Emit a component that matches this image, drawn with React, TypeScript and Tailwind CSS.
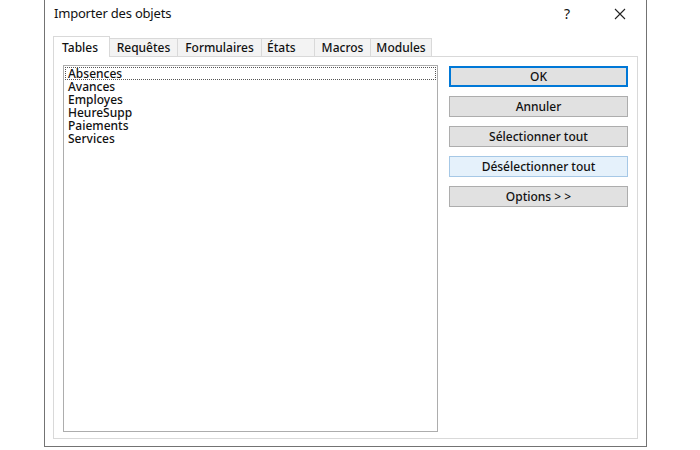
import React from 'react';

const TABS = [
  { label: 'Tables', cls: 'w-[57px]' },
  { label: 'Requêtes', cls: 'w-[68px] justify-center' },
  { label: 'Formulaires', cls: 'w-[84px] justify-center' },
  { label: 'États', cls: 'w-[53px] pl-[5px]' },
  { label: 'Macros', cls: 'w-[56px] justify-center' },
  { label: 'Modules', cls: 'w-[61px] justify-center' },
];

const TABLES = ['Absences', 'Avances', 'Employes', 'HeureSupp', 'Paiements', 'Services'];

const Button: React.FC<{ label: string; variant?: 'default' | 'primary' | 'hover' }> = ({
  label,
  variant = 'default',
}) => {
  const look =
    variant === 'primary'
      ? 'border-2 border-[#0078d7] bg-[#e1e1e1]'
      : variant === 'hover'
      ? 'border border-[#a6c8e6] bg-[#e5f1fb]'
      : 'border border-[#adadad] bg-[#e1e1e1]';
  return (
    <button
      className={`h-[21px] w-[179px] flex items-center justify-center text-[12px] font-medium text-[#111] ${look}`}
    >
      {label}
    </button>
  );
};

export default function App() {
  return (
    <div
      className="w-[700px] h-[450px] bg-white overflow-hidden"
      style={{ fontFamily: '"Noto Sans", "Open Sans", sans-serif' }}
    >
      <div className="ml-[44px] w-[603px] h-[447px] border-x border-b border-[#737373] flex flex-col">
        {/* title bar */}
        <div className="h-[27px] flex items-center pl-[9px] text-[13px] text-[#111]">
          <span className="tracking-[-0.2px]">Importer des objets</span>
          <span className="ml-auto mr-[44px] text-[14px]">?</span>
          <svg width="12" height="12" viewBox="0 0 12 12" className="mr-[20px]">
            <path d="M1 1 L11 11 M11 1 L1 11" stroke="#222" strokeWidth="1.1" />
          </svg>
        </div>

        {/* tabs */}
        <div className="h-[29px] flex items-end pl-[8px] relative z-10">
          {TABS.map((t, i) =>
            i === 0 ? (
              <div
                key={t.label}
                className={`${t.cls} h-[21px] -mb-px bg-white border-x border-t border-[#d9d9d9] flex items-start pt-[2px] pl-[8px] text-[12px] font-medium text-[#111]`}
              >
                {t.label}
              </div>
            ) : (
              <div
                key={t.label}
                className={`${t.cls} h-[18px] bg-[#f3f3f3] border-t border-r border-[#d9d9d9] flex items-center text-[12px] font-medium text-[#111]`}
              >
                {t.label}
              </div>
            )
          )}
        </div>

        {/* panel */}
        <div className="mx-[8px] h-[383px] border border-[#d9d9d9] bg-white flex pl-[9px] pt-[8px] gap-[11px]">
          <div className="w-[375px] h-[367px] border border-[#adadad] bg-white p-px">
            {TABLES.map((name, i) => (
              <div
                key={name}
                className={`h-[13px] leading-[13px] pl-[3px] text-[12px] font-medium text-[#111] ${
                  i === 0 ? 'outline outline-1 outline-dotted outline-[#555] -outline-offset-1' : ''
                }`}
              >
                {name}
              </div>
            ))}
          </div>
          <div className="flex flex-col gap-[9px] pt-[1px]">
            <Button label="OK" variant="primary" />
            <Button label="Annuler" />
            <Button label="Sélectionner tout" />
            <Button label="Désélectionner tout" variant="hover" />
            <Button label="Options > >" />
          </div>
        </div>
      </div>
    </div>
  );
}
